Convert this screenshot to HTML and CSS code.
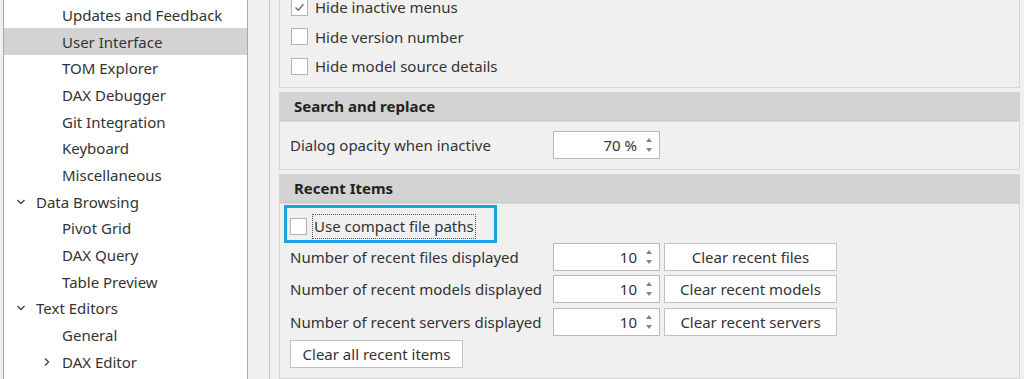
FILE: index.html
```html
<!DOCTYPE html>
<html lang="en">
<head>
    <meta charset="UTF-8">
    <title>Preferences - User Interface</title>
    <link rel="stylesheet" href="styles.css">
</head>
<body>
    <div class="tree">
        <div class="tree-item child">Updates and Feedback</div>
        <div class="tree-item child selected">User Interface</div>
        <div class="tree-item child">TOM Explorer</div>
        <div class="tree-item child">DAX Debugger</div>
        <div class="tree-item child">Git Integration</div>
        <div class="tree-item child">Keyboard</div>
        <div class="tree-item child">Miscellaneous</div>
        <div class="tree-item parent">
            <svg class="chevron" width="10" height="10" viewBox="0 0 10 10"><polyline points="1.5,3 5,6.5 8.5,3" /></svg>
            Data Browsing
        </div>
        <div class="tree-item child">Pivot Grid</div>
        <div class="tree-item child">DAX Query</div>
        <div class="tree-item child">Table Preview</div>
        <div class="tree-item parent">
            <svg class="chevron" width="10" height="10" viewBox="0 0 10 10"><polyline points="1.5,3 5,6.5 8.5,3" /></svg>
            Text Editors
        </div>
        <div class="tree-item child">General</div>
        <div class="tree-item sub">
            <svg class="chevron" width="10" height="10" viewBox="0 0 10 10"><polyline points="3,1.5 6.5,5 3,8.5" /></svg>
            DAX Editor
        </div>
    </div>

    <div class="splitter"></div>

    <div class="settings">
        <!-- General options (scrolled) -->
        <div class="group-body first">
            <label class="check-row"><span class="checkbox checked"><svg width="13" height="13" viewBox="0 0 13 13"><polyline points="2.5,6.5 5.2,9.2 10.5,3.2" /></svg></span>Hide inactive menus</label>
            <label class="check-row"><span class="checkbox"></span>Hide version number</label>
            <label class="check-row"><span class="checkbox"></span>Hide model source details</label>
        </div>

        <div class="group-header">Search and replace</div>
        <div class="group-body">
            <div class="field-row">
                <span class="field-label">Dialog opacity when inactive</span>
                <div class="spinner">
                    <span class="spin-value">70 %</span>
                    <span class="spin-arrows"><i class="up"></i><i class="down"></i></span>
                </div>
            </div>
        </div>

        <div class="group-header">Recent Items</div>
        <div class="group-body recent">
            <div class="check-row">
                <span class="checkbox"></span>
                <span class="focus-text">Use compact file paths</span>
                <div class="highlight-box"></div>
            </div>
            <div class="field-row">
                <span class="field-label">Number of recent files displayed</span>
                <div class="spinner">
                    <span class="spin-value">10</span>
                    <span class="spin-arrows"><i class="up"></i><i class="down"></i></span>
                </div>
                <button class="btn wide">Clear recent files</button>
            </div>
            <div class="field-row">
                <span class="field-label">Number of recent models displayed</span>
                <div class="spinner">
                    <span class="spin-value">10</span>
                    <span class="spin-arrows"><i class="up"></i><i class="down"></i></span>
                </div>
                <button class="btn wide">Clear recent models</button>
            </div>
            <div class="field-row">
                <span class="field-label">Number of recent servers displayed</span>
                <div class="spinner">
                    <span class="spin-value">10</span>
                    <span class="spin-arrows"><i class="up"></i><i class="down"></i></span>
                </div>
                <button class="btn wide">Clear recent servers</button>
            </div>
            <div class="field-row">
                <button class="btn wide">Clear all recent items</button>
            </div>
        </div>
    </div>
</body>
</html>
```

FILE: styles.css
```css
* {
    box-sizing: border-box;
    margin: 0;
    padding: 0;
}

body {
    width: 1024px;
    height: 379px;
    overflow: hidden;
    display: flex;
    background-color: #f0f0f0;
    font-family: 'Noto Sans', 'Open Sans', sans-serif;
    font-size: 15px;
    color: #333;
}

/* Navigation tree */
.tree {
    width: 245px;
    margin-left: 3px;
    padding-top: 1.7px;
    background-color: #fff;
    border-left: 1px solid #a8a8a8;
    border-right: 1px solid #a8a8a8;
    flex-shrink: 0;
}

.tree-item {
    height: 26.67px;
    display: flex;
    align-items: center;
    white-space: nowrap;
}

.tree-item.child {
    padding-left: 58px;
}

.tree-item.parent {
    padding-left: 12px;
}

.tree-item.sub {
    padding-left: 38px;
}

.tree-item.selected {
    background-color: #d3d3d3;
}

.chevron {
    margin-right: 10px;
    fill: none;
    stroke: #444;
    stroke-width: 1.4;
}

.splitter {
    width: 22px;
    border-right: 1px solid #c4c4c4;
    flex-shrink: 0;
}

/* Settings pane */
.settings {
    flex: 1;
    padding: 0 4px 0 9px;
    display: flex;
    flex-direction: column;
}

.group-body {
    border: 1px solid #d6d6d6;
    border-top-color: #dcdcdc;
    padding: 9px 10px 9.5px 10px;
    display: flex;
    flex-direction: column;
}

.group-body.first {
    margin-top: -8.5px;
    padding: 0 10px 6px 11px;
}

.group-header {
    margin-top: 4px;
    height: 29px;
    padding-left: 15px;
    display: flex;
    align-items: center;
    background-color: #d3d3d3;
    border-bottom: 1px solid #c9c9c9;
    font-weight: bold;
    color: #222;
}

.check-row {
    height: 30px;
    line-height: 1.1;
    display: flex;
    align-items: center;
    position: relative;
}

.group-body.first .check-row {
    height: 29.5px;
}

.checkbox {
    width: 17px;
    height: 17px;
    margin-right: 7px;
    border: 1px solid #b4b4b4;
    background-color: #fff;
    display: flex;
    align-items: center;
    justify-content: center;
    flex-shrink: 0;
}

.checkbox svg {
    fill: none;
    stroke: #6a6a6a;
    stroke-width: 1.4;
}

.field-row {
    display: flex;
    align-items: center;
    gap: 4px;
}

.field-label {
    width: 259px;
    white-space: nowrap;
}

.spinner {
    width: 107px;
    height: 28px;
    background-color: #fff;
    border: 1px solid #b8b8b8;
    display: flex;
    align-items: center;
    justify-content: flex-end;
}

.spin-value {
    padding-right: 8px;
}

.spin-arrows {
    width: 8px;
    margin-right: 6px;
    display: flex;
    flex-direction: column;
    align-items: center;
    gap: 6px;
}

.spin-arrows i {
    width: 0;
    height: 0;
    border-left: 3.5px solid transparent;
    border-right: 3.5px solid transparent;
}

.spin-arrows .up {
    border-bottom: 4px solid #858585;
}

.spin-arrows .down {
    border-top: 4px solid #858585;
}

.btn {
    height: 28px;
    background-color: #fff;
    border: 1px solid #c2c2c2;
    font-family: inherit;
    font-size: 15px;
    color: #333;
}

.btn.wide {
    width: 173px;
}

/* Recent items */
.group-body.recent {
    padding: 8px 10px 10px 10px;
    gap: 4.5px;
}

.group-body.recent .check-row {
    margin-bottom: -3.5px;
}

.focus-text {
    border: 1px dotted #555;
    padding: 3px 1px 4px 1px;
    margin-left: -2px;
    white-space: nowrap;
}

.highlight-box {
    position: absolute;
    left: -6px;
    top: -7px;
    width: 213px;
    height: 38px;
    border: 3px solid #1aa1e6;
}
```
